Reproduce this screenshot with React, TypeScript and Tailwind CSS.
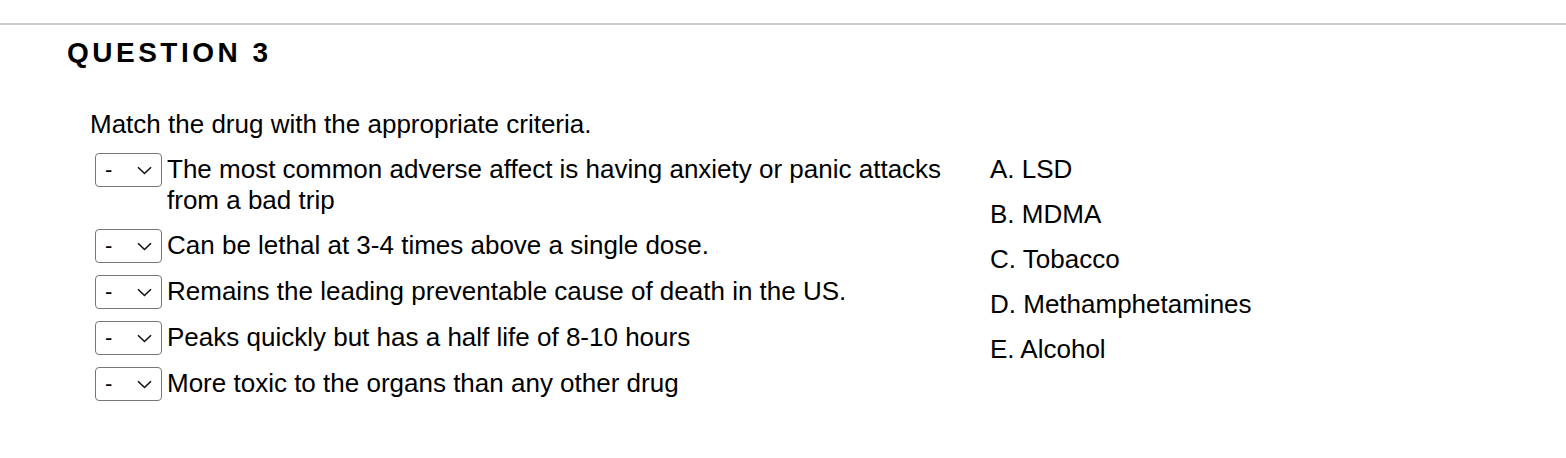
const rows = [
  "The most common adverse affect is having anxiety or panic attacks from a bad trip",
  "Can be lethal at 3-4 times above a single dose.",
  "Remains the leading preventable cause of death in the US.",
  "Peaks quickly but has a half life of 8-10 hours",
  "More toxic to the organs than any other drug",
];

const answers = ["A. LSD", "B. MDMA", "C. Tobacco", "D. Methamphetamines", "E. Alcohol"];

const DropDown = () => (
  <div className="relative w-[67px] h-[34px] shrink-0 rounded-[4px] border border-[#767676] bg-white">
    <span className="absolute left-[9px] top-[3px] text-[22px] leading-[26px]">-</span>
    <svg className="absolute left-[41px] top-[12px]" width="15" height="9" viewBox="0 0 15 9" fill="none">
      <path d="M1 1.2 L7.5 7.5 L14 1.2" stroke="#111" strokeWidth="1.6" />
    </svg>
  </div>
);

export default function App() {
  return (
    <div className="min-h-[458px] bg-white pt-[23px] text-black font-['Liberation_Sans',Arial,sans-serif]">
      <div className="h-[2px] bg-[#cccccc]" />
      <h2 className="ml-[67px] mt-[14px] text-[28px] leading-[28px] font-bold tracking-[3.5px]">QUESTION 3</h2>
      <p className="ml-[90px] mt-[44px] text-[26px] leading-[26px]">Match the drug with the appropriate criteria.</p>
      <div className="flex ml-[95px] mt-[16px] text-[26px] leading-[31px]">
        <div className="w-[870px] flex flex-col gap-[12px]">
          {rows.map((r, i) => (
            <div key={i} className={i === 0 ? "flex gap-[5px] mb-[1px]" : "flex gap-[5px]"}>
              <DropDown />
              <div className="w-[790px] mt-[1px]">{r}</div>
            </div>
          ))}
        </div>
        <div className="ml-[25px] pt-[1px] flex flex-col gap-[14px] leading-[31px]">
          {answers.map((a) => (
            <div key={a}>{a}</div>
          ))}
        </div>
      </div>
    </div>
  );
}
